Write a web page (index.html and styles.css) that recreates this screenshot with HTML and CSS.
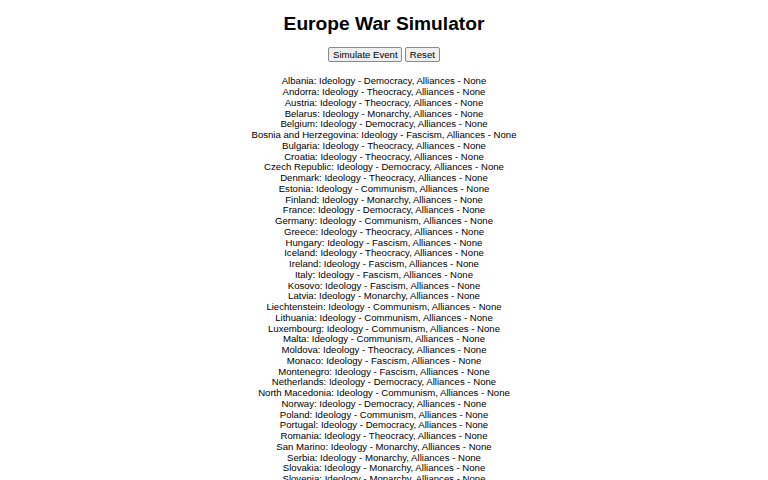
FILE: index.html
```html
<!DOCTYPE html>
<html lang="en">
<head>
    <meta charset="UTF-8">
    <meta name="viewport" content="width=device-width, initial-scale=1.0">
    <title>Europe War Simulator</title>
    <link rel="stylesheet" href="styles.css">
</head>
<body>
    <h1>Europe War Simulator</h1>

    <div class="controls">
        <button id="simulateButton">Simulate Event</button>
        <button id="resetButton">Reset</button>
    </div>

    <div id="countries" class="countries">
        <div class="country">Albania: Ideology - Democracy, Alliances - None</div>
        <div class="country">Andorra: Ideology - Theocracy, Alliances - None</div>
        <div class="country">Austria: Ideology - Theocracy, Alliances - None</div>
        <div class="country">Belarus: Ideology - Monarchy, Alliances - None</div>
        <div class="country">Belgium: Ideology - Democracy, Alliances - None</div>
        <div class="country">Bosnia and Herzegovina: Ideology - Fascism, Alliances - None</div>
        <div class="country">Bulgaria: Ideology - Theocracy, Alliances - None</div>
        <div class="country">Croatia: Ideology - Theocracy, Alliances - None</div>
        <div class="country">Czech Republic: Ideology - Democracy, Alliances - None</div>
        <div class="country">Denmark: Ideology - Theocracy, Alliances - None</div>
        <div class="country">Estonia: Ideology - Communism, Alliances - None</div>
        <div class="country">Finland: Ideology - Monarchy, Alliances - None</div>
        <div class="country">France: Ideology - Democracy, Alliances - None</div>
        <div class="country">Germany: Ideology - Communism, Alliances - None</div>
        <div class="country">Greece: Ideology - Theocracy, Alliances - None</div>
        <div class="country">Hungary: Ideology - Fascism, Alliances - None</div>
        <div class="country">Iceland: Ideology - Theocracy, Alliances - None</div>
        <div class="country">Ireland: Ideology - Fascism, Alliances - None</div>
        <div class="country">Italy: Ideology - Fascism, Alliances - None</div>
        <div class="country">Kosovo: Ideology - Fascism, Alliances - None</div>
        <div class="country">Latvia: Ideology - Monarchy, Alliances - None</div>
        <div class="country">Liechtenstein: Ideology - Communism, Alliances - None</div>
        <div class="country">Lithuania: Ideology - Communism, Alliances - None</div>
        <div class="country">Luxembourg: Ideology - Communism, Alliances - None</div>
        <div class="country">Malta: Ideology - Communism, Alliances - None</div>
        <div class="country">Moldova: Ideology - Theocracy, Alliances - None</div>
        <div class="country">Monaco: Ideology - Fascism, Alliances - None</div>
        <div class="country">Montenegro: Ideology - Fascism, Alliances - None</div>
        <div class="country">Netherlands: Ideology - Democracy, Alliances - None</div>
        <div class="country">North Macedonia: Ideology - Communism, Alliances - None</div>
        <div class="country">Norway: Ideology - Democracy, Alliances - None</div>
        <div class="country">Poland: Ideology - Communism, Alliances - None</div>
        <div class="country">Portugal: Ideology - Democracy, Alliances - None</div>
        <div class="country">Romania: Ideology - Theocracy, Alliances - None</div>
        <div class="country">San Marino: Ideology - Monarchy, Alliances - None</div>
        <div class="country">Serbia: Ideology - Monarchy, Alliances - None</div>
        <div class="country">Slovakia: Ideology - Monarchy, Alliances - None</div>
        <div class="country">Slovenia: Ideology - Monarchy, Alliances - None</div>
        <div class="country">Spain: Ideology - Democracy, Alliances - None</div>
        <div class="country">Sweden: Ideology - Monarchy, Alliances - None</div>
        <div class="country">Switzerland: Ideology - Democracy, Alliances - None</div>
        <div class="country">Ukraine: Ideology - Democracy, Alliances - None</div>
        <div class="country">United Kingdom: Ideology - Monarchy, Alliances - None</div>
        <div class="country">Vatican City: Ideology - Theocracy, Alliances - None</div>
    </div>

    <script>
        const ideologies = ['Democracy', 'Theocracy', 'Monarchy', 'Fascism', 'Communism'];
        const rows = Array.from(document.querySelectorAll('.country'));
        const original = rows.map(row => row.textContent);

        function parse(text) {
            const name = text.split(':')[0];
            const ideology = text.split('Ideology - ')[1].split(',')[0];
            const alliances = text.split('Alliances - ')[1];
            return { name, ideology, alliances };
        }

        function render(row, c) {
            row.textContent = c.name + ': Ideology - ' + c.ideology + ', Alliances - ' + c.alliances;
        }

        document.getElementById('simulateButton').addEventListener('click', function() {
            const a = rows[Math.floor(Math.random() * rows.length)];
            const b = rows[Math.floor(Math.random() * rows.length)];
            if (a === b) return;

            const ca = parse(a.textContent);
            const cb = parse(b.textContent);

            if (ca.ideology === cb.ideology) {
                ca.alliances = ca.alliances === 'None' ? cb.name : ca.alliances + ', ' + cb.name;
                cb.alliances = cb.alliances === 'None' ? ca.name : cb.alliances + ', ' + ca.name;
            } else {
                cb.ideology = Math.random() < 0.5 ? ca.ideology : ideologies[Math.floor(Math.random() * ideologies.length)];
            }
            render(a, ca);
            render(b, cb);
        });

        document.getElementById('resetButton').addEventListener('click', function() {
            rows.forEach((row, i) => row.textContent = original[i]);
        });
    </script>
</body>
</html>
```

FILE: styles.css
```css
body {
    font-family: 'Liberation Sans', Arial, sans-serif;
    font-size: 9.6px;
    color: #000;
    background-color: #fff;
    margin: 0;
    padding: 0 4.8px;
    text-align: center;
}
h1 {
    font-size: 19.2px;
    font-weight: bold;
    margin: 12.9px 0 12px;
}
.controls {
    line-height: 15px;
}
button {
    font-family: 'Liberation Sans', Arial, sans-serif;
    font-size: 9.6px;
    line-height: 11px;
    color: #000;
    background-color: #efefef;
    border: 1px solid #8a8a8a;
    border-radius: 2px;
    padding: 1px 3.8px;
    margin: 0;
    cursor: pointer;
}
button:hover {
    background-color: #e5e5e5;
}
.countries {
    margin-top: 14.4px;
}
.country {
    line-height: 10.75px;
}
```
